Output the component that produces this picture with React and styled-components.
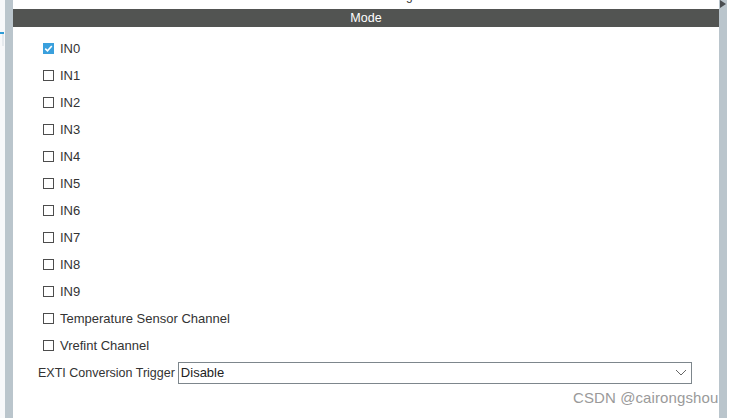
import React from "react";
import styled, { createGlobalStyle } from "styled-components";

const GlobalStyle = createGlobalStyle`
  html, body {
    margin: 0;
    padding: 0;
    background: #ffffff;
  }
  body {
    font-family: "Liberation Sans", Arial, sans-serif;
  }
`;

const Page = styled.div`
  position: relative;
  display: flex;
  width: 738px;
  height: 418px;
  overflow: hidden;
  background: #fff;
`;

const Gutter = styled.div`
  width: 5px;
  display: flex;
  flex-direction: column;
  padding-top: 32px;
  background: #f7f8fa;
`;

const GutterMark = styled.div`
  width: 4px;
  height: 2px;
  background: #2e9bd6;
`;

const GutterLine = styled.div`
  width: 2px;
  height: 12px;
  margin-left: 2px;
  background: #e6eaee;
`;

const SideBar = styled.div`
  width: 8px;
  background: #bac5cc;
`;

const BarArrow = styled.div`
  width: 0;
  height: 0;
  border-top: 4px solid transparent;
  border-bottom: 4px solid transparent;
  border-left: 6px solid #4a4d50;
  margin-left: 1px;
`;

const Main = styled.div`
  flex: 1;
  display: flex;
  flex-direction: column;
`;

const TopStrip = styled.div`
  height: 9px;
  position: relative;
  overflow: hidden;
  font-size: 12px;
  color: #333;
`;

const CutText = styled.span`
  position: absolute;
  left: 393px;
  top: -11px;
`;

const Header = styled.div`
  height: 18px;
  background: #525452;
  color: #ffffff;
  font-size: 12.5px;
  display: flex;
  align-items: center;
  justify-content: center;
`;

const Content = styled.div`
  display: flex;
  flex-direction: column;
  padding-top: 8px;
`;

const Row = styled.label`
  height: 27px;
  display: flex;
  align-items: center;
  padding-left: 30px;
  font-size: 13px;
  color: #333;
  gap: 6px;
`;

const Box = styled.span`
  box-sizing: border-box;
  width: 11px;
  height: 11px;
  border: 1px solid ${(p) => (p.$checked ? "#3aa0dd" : "#4d4d4d")};
  background: ${(p) => (p.$checked ? "#3aa0dd" : "#ffffff")};
  display: flex;
  align-items: center;
  justify-content: center;
`;

const TriggerRow = styled.div`
  height: 27px;
  display: flex;
  align-items: center;
  padding-left: 25px;
  font-size: 12.5px;
  color: #333;
  gap: 3px;
`;

const Select = styled.div`
  box-sizing: border-box;
  width: 514px;
  height: 22px;
  border: 1px solid #7d868c;
  display: flex;
  align-items: center;
  justify-content: space-between;
  padding: 0 4px 0 2px;
  font-size: 13px;
  color: #222;
`;

const Watermark = styled.div`
  position: absolute;
  left: 573px;
  top: 389px;
  font-size: 15px;
  color: #9a9a9a;
  letter-spacing: 0.1px;
`;

const RightSpace = styled.div`
  width: 11px;
`;

const channels = ["IN0", "IN1", "IN2", "IN3", "IN4", "IN5", "IN6", "IN7", "IN8", "IN9", "Temperature Sensor Channel", "Vrefint Channel"];

function Check({ checked }) {
  return (
    <Box $checked={checked}>
      {checked && (
        <svg width="9" height="9" viewBox="0 0 9 9">
          <path d="M1.2 4.6 L3.5 6.8 L7.8 2" fill="none" stroke="#fff" strokeWidth="1.6" />
        </svg>
      )}
    </Box>
  );
}

export default function App() {
  return (
    <>
      <GlobalStyle />
      <Page>
        <Gutter>
          <GutterMark />
          <GutterLine />
        </Gutter>
        <SideBar />
        <Main>
          <TopStrip>
            <CutText>g</CutText>
          </TopStrip>
          <Header>Mode</Header>
          <Content>
            {channels.map((c, i) => (
              <Row key={c}>
                <Check checked={i === 0} />
                {c}
              </Row>
            ))}
            <TriggerRow>
              EXTI Conversion Trigger
              <Select>
                <span>Disable</span>
                <svg width="12" height="7" viewBox="0 0 12 7">
                  <path d="M1 1 L6 6 L11 1" fill="none" stroke="#666" strokeWidth="1" />
                </svg>
              </Select>
            </TriggerRow>
          </Content>
        </Main>
        <SideBar>
          <BarArrow />
        </SideBar>
        <RightSpace />
        <Watermark>CSDN @cairongshou</Watermark>
      </Page>
    </>
  );
}
